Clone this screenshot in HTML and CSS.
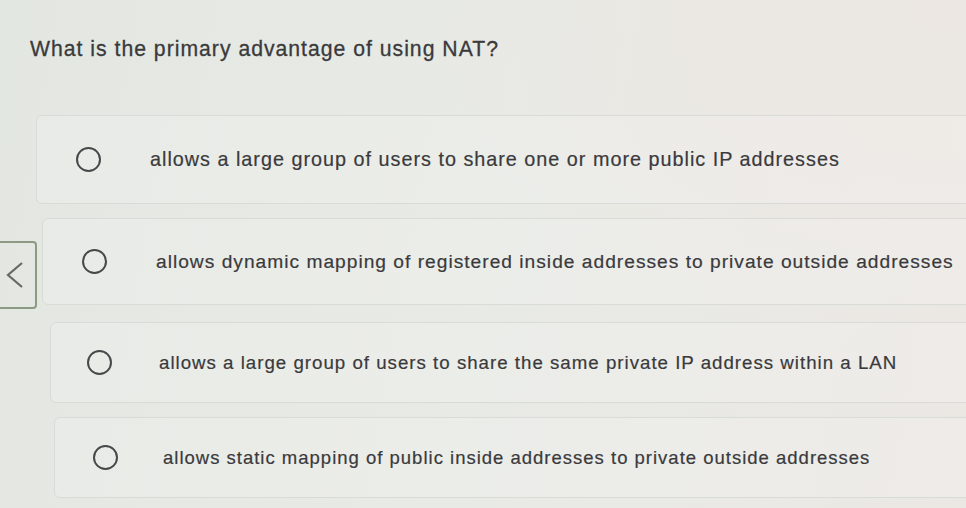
FILE: index.html
```html
<!DOCTYPE html>
<html lang="en">
<head>
<meta charset="utf-8">
<title>Quiz question</title>
<link rel="stylesheet" href="styles.css">
</head>
<body>
<main class="quiz">
  <h1 class="question">What is the primary advantage of using NAT?</h1>
  <ul class="options">
    <li class="option option--a">
      <span class="radio"></span>
      <span class="label">allows a large group of users to share one or more public IP addresses</span>
    </li>
    <li class="option option--b">
      <span class="radio"></span>
      <span class="label">allows dynamic mapping of registered inside addresses to private outside addresses</span>
    </li>
    <li class="option option--c">
      <span class="radio"></span>
      <span class="label">allows a large group of users to share the same private IP address within a LAN</span>
    </li>
    <li class="option option--d">
      <span class="radio"></span>
      <span class="label">allows static mapping of public inside addresses to private outside addresses</span>
    </li>
  </ul>
  <button class="prev-tab" type="button" aria-label="Previous">
    <svg width="18" height="28" viewBox="0 0 18 28"><path d="M16 2 L2 14 L16 26" fill="none" stroke="#666a64" stroke-width="2.2"/></svg>
  </button>
</main>
</body>
</html>
```
FILE: styles.css
```css
html, body {
  margin: 0;
  height: 100%;
}
body {
  overflow: hidden;
  font-family: "Liberation Sans", Arial, sans-serif;
  color: #3a3a3c;
  background:
    radial-gradient(ellipse 60% 70% at 100% 0%, #ece7e3 0%, rgba(236, 231, 227, 0) 100%),
    linear-gradient(100deg, #e3e7e2 0%, #e8eae5 50%, #ebe8e4 100%);
}
.quiz {
  position: relative;
  height: 100%;
  padding: 32px 0 0 0;
  box-sizing: border-box;
}
.question {
  margin: 0 0 0 30px;
  font-size: 21.2px;
  font-weight: 400;
  line-height: 34px;
  letter-spacing: 1px;
  -webkit-text-stroke: 0.3px #3a3a3c;
}
.options {
  list-style: none;
  margin: 49px 0 0 0;
  padding: 0;
  display: flex;
  flex-direction: column;
  gap: 14px;
}
.option {
  display: flex;
  align-items: center;
  margin-right: -40px;
  border: 1px solid #d9dbd6;
  border-radius: 6px;
  background: rgba(255, 255, 255, 0.16);
  box-sizing: border-box;
  letter-spacing: 1px;
  -webkit-text-stroke: 0.2px #3a3a3c;
}
.option--a { margin-left: 36px; height: 89px; padding-left: 39px; font-size: 19.8px; }
.option--b { margin-left: 42px; height: 87px; padding-left: 39px; font-size: 19.2px; }
.option--c { margin-left: 50px; height: 81px; padding-left: 36px; font-size: 18.7px; margin-top: 3px; }
.option--d { margin-left: 54px; height: 81px; padding-left: 38px; font-size: 18.5px; }
.radio {
  flex: none;
  width: 21px;
  height: 21px;
  border: 2.4px solid #47484a;
  border-radius: 50%;
  -webkit-text-stroke: 0;
}
.label {
  margin-left: 49px;
  white-space: nowrap;
}
.option--c .label { margin-left: 47px; }
.option--d .label { margin-left: 45px; }
.prev-tab {
  position: absolute;
  left: -4px;
  top: 241px;
  width: 41px;
  height: 68px;
  padding: 0 0 0 8px;
  border: 2px solid #8d9a83;
  border-radius: 4px;
  background: transparent;
  display: flex;
  align-items: center;
  justify-content: flex-start;
}
```
